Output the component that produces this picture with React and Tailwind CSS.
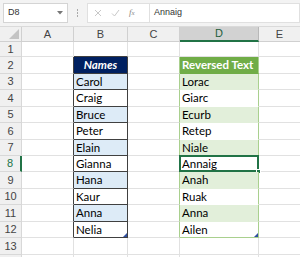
import React from "react";

const names = ["Carol","Craig","Bruce","Peter","Elain","Gianna","Hana","Kaur","Anna","Nelia"];
const rev = ["Lorac","Giarc","Ecurb","Retep","Niale","Annaig","Anah","Ruak","Anna","Ailen"];
const rowH = [15,17,16,17,16,17,16,16,17,16,17,16,17,20];

function Corner() {
  return (
    <div className="relative w-[22px] h-[15px] shrink-0 bg-[#f0f0f0] border-r border-b border-[#d0d0d0]">
      <svg className="absolute right-[2px] bottom-[2px]" width="10" height="10" viewBox="0 0 10 10">
        <polygon points="10,0 10,10 0,10" fill="#c4c4c4" />
      </svg>
    </div>
  );
}

export default function App() {
  const cell = "box-border shrink-0 border-r border-b flex items-center";
  return (
    <div className="w-[300px] h-[257px] overflow-hidden bg-white" style={{ fontFamily: "Lato, 'Liberation Sans', sans-serif" }}>
      {/* toolbar */}
      <div className="h-[27px] bg-[#f3f3f3] flex items-start pt-[3px] pl-[3px] border-b border-[#dadada]" style={{ fontFamily: "'Liberation Sans', Arial, sans-serif" }}>
        <div className="w-[65px] h-[20px] bg-white border border-[#d4d4d4] flex items-center justify-between pl-[4px] pr-[4px]">
          <span className="text-[9px] text-[#333]">D8</span>
          <svg width="6" height="4" viewBox="0 0 6 4"><polygon points="0,0 6,0 3,3.5" fill="#777" /></svg>
        </div>
        <div className="w-[19px] h-[20px] flex flex-col items-center justify-center gap-[1.5px]">
          <div className="w-[1.5px] h-[1.5px] bg-[#aaa]" />
          <div className="w-[1.5px] h-[1.5px] bg-[#aaa]" />
          <div className="w-[1.5px] h-[1.5px] bg-[#aaa]" />
        </div>
        <div className="w-[63px] h-[20px] bg-white border border-[#e0e0e0] flex items-center pl-[6px] gap-[9px]">
          <svg width="8" height="8" viewBox="0 0 8 8"><path d="M1 1 L7 7 M7 1 L1 7" stroke="#c8c8c8" strokeWidth="1" /></svg>
          <svg width="9" height="8" viewBox="0 0 9 8"><path d="M1 4.5 L3.5 7 L8 1" stroke="#c8c8c8" strokeWidth="1" fill="none" /></svg>
          <span className="text-[9px] italic text-[#888]" style={{ fontFamily: "'Liberation Serif', serif" }}>f<span className="text-[7px]">x</span></span>
        </div>
        <div className="flex-1 h-[20px] bg-white border border-[#e0e0e0] border-l-0 flex items-center pl-[4px]">
          <span className="text-[9px] text-[#333]">Annaig</span>
        </div>
      </div>
      {/* column headers */}
      <div className="flex text-[11px] text-[#444]" style={{ fontFamily: "'Liberation Sans', Arial, sans-serif" }}>
        <Corner />
        <div className="w-[52px] h-[15px] shrink-0 bg-[#f0f0f0] border-r border-b border-[#d0d0d0] flex items-center justify-center">A</div>
        <div className="w-[54px] h-[15px] shrink-0 bg-[#f0f0f0] border-r border-b border-[#d0d0d0] flex items-center justify-center">B</div>
        <div className="w-[52px] h-[15px] shrink-0 bg-[#f0f0f0] border-r border-b border-[#d0d0d0] flex items-center justify-center">C</div>
        <div className="w-[79px] h-[15px] shrink-0 bg-[#d2d2d2] border-r border-[#b8b8b8] border-b-2 border-b-[#217346] flex items-center justify-center text-[#1e5e3a]">D</div>
        <div className="flex-1 h-[15px] bg-[#f0f0f0] border-b border-[#d0d0d0] flex items-center justify-center">E</div>
      </div>
      {/* rows */}
      {rowH.map((h, i) => {
        const r = i + 1;
        const inTable = r >= 2 && r <= 12;
        const dataIdx = r - 3;
        const odd = r % 2 === 1;
        const selected = r === 8;
        let bCls = "border-r-[#e1e1e1] border-b-[#e1e1e1]";
        let bContent = null;
        if (r === 1) bCls = "border-r-[#e1e1e1] border-b-[#404040]";
        if (r === 2) {
          bCls = "bg-[#002060] border-r-[#404040] border-b-[#404040] justify-center";
          bContent = <span className="text-white font-bold italic text-[11.5px]">Names</span>;
        } else if (dataIdx >= 0 && dataIdx < 10) {
          bCls = `${odd ? "bg-[#ddebf7]" : "bg-white"} border-r-[#404040] border-b-[#404040] pl-[2px]`;
          bContent = <span className="text-[11.5px] text-black">{names[dataIdx]}</span>;
        }
        let dCls = "border-r-[#e1e1e1] border-b-[#e1e1e1]";
        let dContent = null;
        if (r === 2) {
          dCls = "bg-[#70ad47] border-r-[#a9d08e] border-b-[#70ad47] pl-[2px]";
          dContent = <span className="text-white font-bold text-[11.5px]">Reversed Text</span>;
        } else if (dataIdx >= 0 && dataIdx < 10) {
          dCls = `${odd ? "bg-[#e2efda] border-b-[#e2efda]" : "bg-white border-b-white"} border-r-[#a9d08e] pl-[2px]`;
          if (r === 12) dCls = "bg-white border-b-[#a9d08e] border-r-[#a9d08e] pl-[2px]";
          dContent = <span className="text-[11.5px] text-black">{rev[dataIdx]}</span>;
        }
        return (
          <div key={r} className="flex" style={{ height: h }}>
            <div className={`w-[22px] h-full shrink-0 bg-[#f0f0f0] border-b border-[#d8d8d8] flex items-center justify-center text-[11px] ${selected ? "border-r-2 border-r-[#217346] text-[#217346] bg-[#e1e1e1]" : "border-r text-[#444]"}`} style={{ fontFamily: "'Liberation Sans', Arial, sans-serif" }}>
              {r <= 13 ? r : ""}
            </div>
            <div className={`${cell} w-[52px] h-full ${inTable ? "border-r-[#404040]" : "border-r-[#e1e1e1]"} border-b-[#e1e1e1]`} />
            <div className={`${cell} relative w-[54px] h-full ${bCls}`}>
              {bContent}
              {r === 12 && (
                <svg className="absolute right-0 bottom-0" width="4" height="4" viewBox="0 0 4 4"><polygon points="4,0 4,4 0,4" fill="#2f4f9f" /></svg>
              )}
            </div>
            <div className={`${cell} w-[52px] h-full ${inTable ? "border-r-[#a9d08e]" : "border-r-[#e1e1e1]"} border-b-[#e1e1e1]`} />
            <div className={`${cell} relative w-[79px] h-full ${dCls}`}>
              {dContent}
              {r === 12 && (
                <svg className="absolute right-0 bottom-0" width="4" height="4" viewBox="0 0 4 4"><polygon points="4,0 4,4 0,4" fill="#2f4f9f" /></svg>
              )}
              {selected && (
                <>
                  <div className="absolute left-[-1px] top-[-1px] right-[-1px] bottom-[-1px] border-2 border-[#217346]" />
                  <div className="absolute right-[-3px] bottom-[-3px] w-[5px] h-[5px] bg-[#217346] border border-white" />
                </>
              )}
            </div>
            <div className="flex-1 h-full box-border border-b border-[#e1e1e1]" />
          </div>
        );
      })}
    </div>
  );
}
